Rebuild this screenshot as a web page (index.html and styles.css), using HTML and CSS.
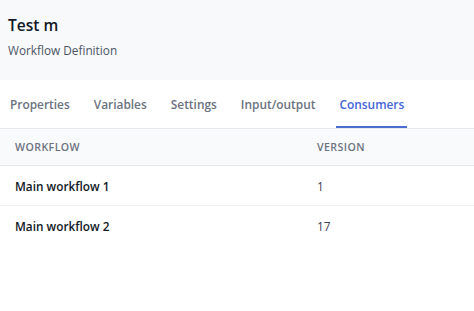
FILE: index.html
```html
<!DOCTYPE html>
<html lang="en">
<head>
    <meta charset="UTF-8">
    <meta name="viewport" content="width=device-width, initial-scale=1.0">
    <title>Test m</title>
    <link rel="stylesheet" href="styles.css">
</head>
<body>
    <div class="panel-header">
        <h2 class="panel-title">Test m</h2>
        <p class="panel-subtitle">Workflow Definition</p>
    </div>

    <nav class="tabs">
        <a href="#" class="tab">Properties</a>
        <a href="#" class="tab">Variables</a>
        <a href="#" class="tab">Settings</a>
        <a href="#" class="tab">Input/output</a>
        <a href="#" class="tab active">Consumers</a>
    </nav>

    <table class="consumers">
        <thead>
            <tr>
                <th class="col-name">Workflow</th>
                <th>Version</th>
            </tr>
        </thead>
        <tbody>
            <tr>
                <td class="col-name">Main workflow 1</td>
                <td class="version">1</td>
            </tr>
            <tr>
                <td class="col-name">Main workflow 2</td>
                <td class="version">17</td>
            </tr>
        </tbody>
    </table>
</body>
</html>
```

FILE: styles.css
```css
body {
    font-family: 'Open Sans', 'Noto Sans', sans-serif;
    color: #1f2937;
    margin: 0;
    background-color: #fff;
}
.panel-header {
    background-color: #f8f9fb;
    height: 80px;
    padding: 15px 8px 0;
    box-sizing: border-box;
}
.panel-title {
    margin: 0;
    font-size: 15.5px;
    font-weight: 600;
    color: #111827;
    line-height: 20px;
}
.panel-subtitle {
    margin: 6px 0 0;
    font-size: 11.8px;
    color: #4b5563;
    line-height: 18px;
}
.tabs {
    display: flex;
    gap: 24px;
    padding: 0 10px;
    height: 49px;
    border-bottom: 1px solid #e5e7eb;
    box-sizing: border-box;
}
.tab {
    display: flex;
    align-items: center;
    font-size: 11.9px;
    font-weight: 600;
    color: #6b7280;
    text-decoration: none;
    border-bottom: 2px solid transparent;
    padding: 1px 0 0;
}
.tab.active {
    color: #4365d6;
    border-bottom-color: #4a6fd1;
    padding: 1px 3px 0;
    margin-left: -3px;
}
.consumers {
    width: 100%;
    border-collapse: collapse;
}
.consumers th {
    background-color: #f9fafb;
    text-align: left;
    font-size: 10.6px;
    font-weight: 600;
    color: #6b7280;
    text-transform: uppercase;
    letter-spacing: 0.04em;
    height: 36px;
    padding: 0;
    border-bottom: 1px solid #e5e7eb;
}
.consumers td {
    font-size: 11.8px;
    height: 39px;
    padding: 0;
    border-bottom: 1px solid #f0f1f3;
}
.consumers tbody tr:last-child td {
    border-bottom: none;
}
.consumers .col-name {
    padding-left: 15px;
    width: 302px;
}
.consumers td.col-name {
    font-weight: 600;
    color: #111827;
}
.version {
    color: #374151;
}
```
